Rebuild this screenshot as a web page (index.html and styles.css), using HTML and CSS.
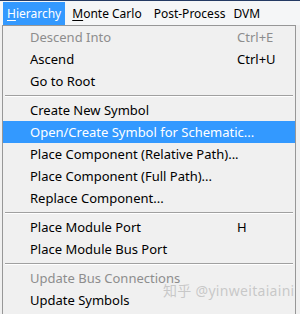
FILE: index.html
```html
<!DOCTYPE html>
<html lang="en">
<head>
    <meta charset="UTF-8">
    <title>Hierarchy Menu</title>
    <link rel="stylesheet" href="styles.css">
</head>
<body>

    <!-- Menu Bar -->
    <div class="menubar">
        <span class="menu-title active"><u>H</u>ierarchy</span>
        <span class="menu-title monte"><u>M</u>onte Carlo</span>
        <span class="menu-title post">Post-Process</span>
        <span class="menu-title">DVM</span>
    </div>

    <!-- Dropdown -->
    <div class="dropdown">
        <div class="item disabled"><span class="label">Descend Into</span><span class="key">Ctrl+E</span></div>
        <div class="item"><span class="label">Ascend</span><span class="key">Ctrl+U</span></div>
        <div class="item"><span class="label">Go to Root</span></div>
        <div class="sep"></div>
        <div class="item"><span class="label">Create New Symbol</span></div>
        <div class="item selected"><span class="label">Open/Create Symbol for Schematic...</span></div>
        <div class="item"><span class="label">Place Component (Relative Path)...</span></div>
        <div class="item"><span class="label">Place Component (Full Path)...</span></div>
        <div class="item"><span class="label">Replace Component...</span></div>
        <div class="sep"></div>
        <div class="item"><span class="label">Place Module Port</span><span class="key">H</span></div>
        <div class="item"><span class="label">Place Module Bus Port</span></div>
        <div class="sep"></div>
        <div class="item disabled"><span class="label">Update Bus Connections</span></div>
        <div class="item"><span class="label">Update Symbols</span></div>
    </div>

    <div class="watermark">知乎 @yinweitaiaini</div>

</body>
</html>
```

FILE: styles.css
```css
body {
    margin: 0;
    font-family: 'Noto Sans', 'Noto Sans CJK SC', sans-serif;
    font-size: 13px;
    background-color: #f0f0f0;
    color: #000000;
    position: relative;
    overflow: hidden;
    height: 314px;
}

/* Menu Bar */
.menubar {
    display: flex;
    height: 23px;
    padding: 1px 0 0 3px;
    border-top: 1px solid #243a63;
    background-color: #f5f6f7;
    font-size: 12px;
}

.menu-title {
    display: flex;
    align-items: center;
    padding: 0 4px;
}

.menu-title.monte {
    margin-left: 3px;
}

.menu-title.post {
    margin-left: 4px;
}

.menu-title u {
    text-underline-offset: 2px;
}

.menu-title.active {
    background-color: #3399ff;
    color: #ffffff;
}

/* Dropdown */
.dropdown {
    margin-left: 2px;
    width: 294px;
    min-height: 295px;
    border: 1px solid #979797;
    border-bottom: none;
    background-color: #f0f0f0;
    box-sizing: border-box;
}

.item {
    display: flex;
    align-items: center;
    height: 22px;
    padding-left: 27px;
    white-space: nowrap;
}

.item .label {
    width: 205px;
}

.item .key {
    padding-left: 2px;
}

.item.disabled {
    color: #8d8d8d;
}

.item.selected {
    background-color: #3399ff;
    color: #ffffff;
}

.sep {
    height: 1px;
    margin: 3px 2px 2px 2px;
    background-color: #a0a0a0;
    border-bottom: 1px solid #ffffff;
}

/* Watermark */
.watermark {
    position: absolute;
    left: 163px;
    top: 280px;
    font-size: 14px;
    color: rgba(190, 190, 190, 0.8);
    letter-spacing: 0.3px;
}
```
